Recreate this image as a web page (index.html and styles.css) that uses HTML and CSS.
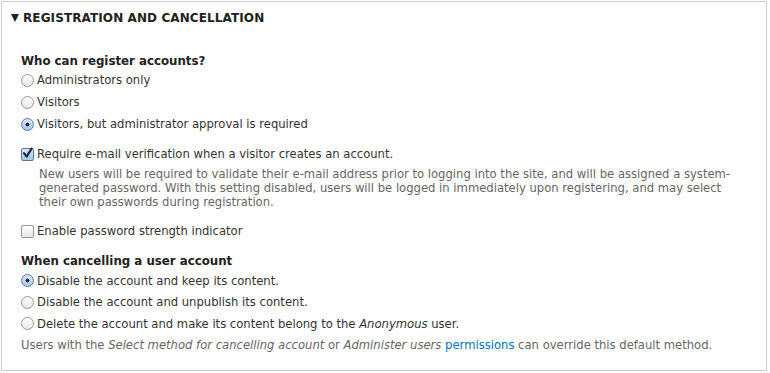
FILE: index.html
```html
<!DOCTYPE html>
<html>
<head>
<meta charset="utf-8">
<link rel="stylesheet" href="styles.css">
</head>
<body>
<div class="panel">
  <div class="legend"><span class="tri"></span><span class="legend-text">REGISTRATION AND CANCELLATION</span></div>
  <div class="content">
    <div class="group g1">
      <div class="label">Who can register accounts?</div>
      <div class="opt"><span class="radio"></span><span>Administrators only</span></div>
      <div class="opt"><span class="radio"></span><span>Visitors</span></div>
      <div class="opt"><span class="radio on"></span><span>Visitors, but administrator approval is required</span></div>
    </div>
    <div class="group g2">
      <div class="opt"><span class="check on"><svg width="13" height="13" viewBox="0 0 13 13"><path d="M3 6.2 L5.6 9.6 L10.6 1.6" fill="none" stroke="#1a2a44" stroke-width="2.2" stroke-linejoin="round" stroke-linecap="round"/></svg></span><span>Require e-mail verification when a visitor creates an account.</span></div>
      <div class="desc">New users will be required to validate their e-mail address prior to logging into the site, and will be assigned a system-generated password. With this setting disabled, users will be logged in immediately upon registering, and may select their own passwords during registration.</div>
    </div>
    <div class="group g3">
      <div class="opt"><span class="check"></span><span>Enable password strength indicator</span></div>
    </div>
    <div class="group g4">
      <div class="label l2">When cancelling a user account</div>
      <div class="opt o2"><span class="radio on"></span><span>Disable the account and keep its content.</span></div>
      <div class="opt o2"><span class="radio"></span><span>Disable the account and unpublish its content.</span></div>
      <div class="opt o2"><span class="radio"></span><span>Delete the account and make its content belong to the <em>Anonymous</em> user.</span></div>
      <div class="note">Users with the <em>Select method for cancelling account</em> or <em>Administer users</em> <a href="#">permissions</a> can override this default method.</div>
    </div>
  </div>
</div>
</body>
</html>
```

FILE: styles.css
```css
html, body {
  margin: 0;
  padding: 0;
  background: #fff;
}
body {
  font-family: "DejaVu Sans", "Liberation Sans", sans-serif;
  font-size: 11.6px;
  color: #333;
}
.panel {
  margin: 1px 0 0 1px;
  width: 764px;
  height: 368px;
  border: 1px solid #cccccc;
}
.legend {
  display: flex;
  align-items: center;
  height: 31px;
  padding-left: 9px;
  gap: 4px;
}
.tri {
  width: 0;
  height: 0;
  border-left: 4.5px solid transparent;
  border-right: 4.5px solid transparent;
  border-top: 8px solid #222;
  margin-top: 1px;
}
.legend-text {
  font-weight: bold;
  font-size: 12px;
  color: #222;
  letter-spacing: 0.1px;
}
.content {
  padding-left: 19px;
}
.group.g1 { margin-top: 20px; }
.group.g2 { margin-top: 8px; }
.group.g3 { margin-top: 11px; }
.group.g4 { margin-top: 11px; }
.label {
  font-weight: bold;
  font-size: 11.8px;
  color: #222;
  height: 16px;
  line-height: 16px;
}
.label.l2 {
  height: 17px;
}
.opt {
  display: flex;
  align-items: center;
  gap: 3px;
  height: 22px;
}
.opt.o2 {
  height: 21.5px;
}
.radio {
  width: 13px;
  height: 13px;
  flex: none;
  box-sizing: border-box;
  border-radius: 50%;
  border: 1px solid #9a9a9a;
  background: linear-gradient(#ffffff, #e6e6e6);
}
.radio.on {
  border-color: #5b7aa6;
  background: radial-gradient(circle at 50% 50%, #1d2a3e 0 1.8px, transparent 2.2px), linear-gradient(#dbe8f7, #a8c6ea);
}
.check {
  width: 13px;
  height: 13px;
  flex: none;
  box-sizing: border-box;
  border-radius: 2px;
  border: 1px solid #9a9a9a;
  background: linear-gradient(#ffffff, #e6e6e6);
  position: relative;
}
.check.on {
  border-color: #5b7aa6;
  background: linear-gradient(#dbe8f7, #a8c6ea);
}
.check svg {
  position: absolute;
  left: -1px;
  top: -2px;
}
.desc {
  margin-left: 18px;
  color: #666;
  line-height: 14px;
  margin-top: 2px;
  padding-right: 20px;
}
.note {
  color: #666;
  line-height: 20px;
}
.note a {
  color: #0074bd;
  text-decoration: none;
}
em {
  font-style: italic;
}
```
